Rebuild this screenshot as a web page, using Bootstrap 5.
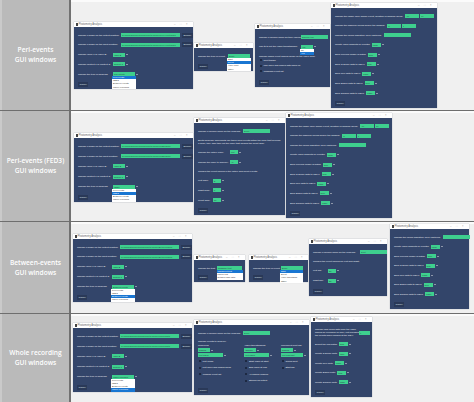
<!DOCTYPE html>
<html lang="en">
<head>
<meta charset="utf-8">
<title>GUI windows</title>
<link href="https://cdn.jsdelivr.net/npm/bootstrap@5.3.0/dist/css/bootstrap.min.css" rel="stylesheet">
<style>
html,body{margin:0;width:474px;height:402px;overflow:hidden;background:#fff}
.sheet{width:474px;height:402px}
.band{border-bottom:1.5px solid #6e6e6e}
.b1{height:111px}.b2{height:111px}.b3{height:92px}.b4{height:88px;border-bottom:0}
.side{width:71px;flex:none;background:#bababa;border-left:2px solid #cacaca;border-right:2px solid #717171;color:#fff;font:600 6.6px/10px "Open Sans",sans-serif;text-align:center}
.canvas{flex:1;background:#f0f0f0;border-top:2px solid #fbfbfb;position:relative}
.pw{position:absolute;background:#33456a;box-shadow:0 0 1px #9aa0aa}
.pw-title{height:5px;background:#fff;color:#666;font:2.6px/5px "Liberation Sans",sans-serif;padding-left:1.5px;gap:1px;flex:none;white-space:nowrap;overflow:hidden}
.pw-icon{width:2px;height:2.5px;background:#444;flex:none}
.pw-ctrl{margin-left:auto;color:#999;padding-right:1px;letter-spacing:4.5px;flex:none}
.pw-body{flex:1;padding:6px 4px 2px;color:#eef1f6;font:2.4px/3px "Liberation Sans",sans-serif;min-height:0}
.rw{height:4px;gap:1px;flex:none}
.rw2{height:6px}.rw3{height:9px}
.lb{flex:none;white-space:nowrap}
.wrapl{white-space:normal;flex:none}
.form-control.gi{display:block;height:4px;min-height:0;padding:0 1px;border:0;border-radius:0;background:#3ecf8e;color:#1d5a4a;font:2.1px/4px "Liberation Sans",sans-serif;flex:none}
.gs{display:inline-block;height:4px;background:#3ecf8e;color:#1f3a44;padding-left:1px;line-height:4px;flex:none;font-size:2.1px;white-space:nowrap}
.arrow{width:0;height:0;border-left:1px solid transparent;border-right:1px solid transparent;border-top:1.2px solid #e8e8e8;flex:none}
.btn.gb{height:5px;min-height:0;padding:0 1.5px;border:0;border-radius:0;background:#2a3958;color:#dfe3ea;font:2.3px/5px "Liberation Sans",sans-serif;flex:none;--bs-btn-hover-bg:#2a3958}
.cancel-row{flex:none;line-height:5px}
.ddl{position:absolute;z-index:2;background:#fff;color:#333;font:2.2px/3.2px "Liberation Sans",sans-serif;box-shadow:0 0 .5px #777}
.ddl div{padding-left:1px;white-space:nowrap;overflow:hidden}
.ddl .on{background:#1976d2;color:#fff}
.ck{height:5.5px;gap:1.5px;flex:none;padding-left:1px;white-space:nowrap}
.ck i{width:2px;height:2px;background:#1d2942;display:block;flex:none}
.sub{line-height:3px;flex:none;white-space:nowrap}
/* window places on the free canvas of each band */
.a1{left:3px;top:20px;width:119px;height:67px}
.a2{left:123px;top:41px;width:59px;height:28px}
.a3{left:184px;top:22px;width:75px;height:63px}
.a4{left:260px;top:1px;width:106px;height:105px}
.c1{left:3px;top:20px;width:119px;height:69px}
.c2{left:123px;top:5px;width:91px;height:97px}
.c3{left:215px;top:0;width:106px;height:105px}
.e1{left:2px;top:10px;width:119px;height:68px}
.e2{left:123px;top:31px;width:51px;height:27px}
.e3{left:178px;top:31px;width:59px;height:27px}
.e4{left:238px;top:15px;width:78px;height:57px}
.e5{left:319px;top:0;width:79px;height:85px}
.g1{left:2px;top:7px;width:119px;height:69px}
.g2{left:123px;top:4px;width:115px;height:75px}
.g3{left:240px;top:1px;width:61px;height:80px}
/* label columns */
.l13{width:14px}.l18{width:18px}.l26{width:26px}.l29{width:29px}.l32{width:31px}.l33{width:34px}.l40{width:42px}.l41{width:41px}
.l44{width:44px}.l46{width:45.5px}
/* field widths */
.i59{width:59px!important}.i27{width:27px!important}.i14{width:14px!important}.i11{width:11px!important}.i26{width:26px}.i25{width:25px}
.i8{width:8px}.i9{width:9px}.i12{width:12px}.i22{width:22px}
.ml2{margin-left:1px}
/* dropdown places */
.d-main{left:34px;top:4px;width:24px}
.d-event{left:29px;top:4px;width:24px}
.d-yes{left:41px;top:4px;width:14px}
.d-test{left:18.5px;top:4px;width:26px}
.d-ev2{left:27px;top:4px;width:23px}
/* whole recording columns */
.trio{height:40px;margin-top:-2px}
.tc1{width:47px}.tc2{width:37px}.tc3{width:24px}
.tc1,.tc2,.tc3{gap:1px}
.txtblk{flex:none}
</style>
</head>
<body>
<div class="sheet d-flex flex-column">

<section class="band b1 d-flex">
 <div class="side d-flex align-items-center justify-content-center">Peri-events<br>GUI windows</div>
 <div class="canvas">
  <div class="pw a1 d-flex flex-column">
   <div class="pw-title d-flex align-items-center"><span class="pw-icon"></span>Photometry Analysis<span class="pw-ctrl">–□×</span></div>
   <div class="pw-body d-flex flex-column justify-content-between">
    <div class="rw d-flex align-items-center"><span class="lb l40">Choose a folder for the output location:</span><input class="form-control gi i59" readonly value="C:\Users\Documents\Photometry\GuPPy\Peri-events\Data"><button class="btn gb ml2">Browse</button></div>
    <div class="rw d-flex align-items-center"><span class="lb l40">Choose a folder for the input location:</span><input class="form-control gi i59" readonly value="C:\Users\Documents\Photometry\GuPPy\Peri-events\Data"><button class="btn gb ml2">Browse</button></div>
    <div class="rw d-flex align-items-center"><span class="lb l33">Choose value 0 or value B:</span><span class="gs i12">Value B</span><span class="arrow"></span></div>
    <div class="rw d-flex align-items-center"><span class="lb l33">Choose context 1 or context 2:</span><span class="gs i12">Context 1</span><span class="arrow"></span></div>
    <div class="rw d-flex align-items-center position-relative"><span class="lb l33">Choose the type of analysis:</span><span class="gs i22">Peri-events</span><span class="arrow"></span>
     <div class="ddl d-main"><div class="on">Peri-events</div><div>FED3</div><div>Between-events</div><div>Whole recording</div></div></div>
    <div class="cancel-row"><button class="btn gb">Cancel</button></div>
   </div>
  </div>
  <div class="pw a2 d-flex flex-column">
   <div class="pw-title d-flex align-items-center"><span class="pw-icon"></span>Photometry Analysis<span class="pw-ctrl">–□×</span></div>
   <div class="pw-body d-flex flex-column justify-content-between">
    <div class="rw d-flex align-items-center position-relative"><span class="lb l29">Choose the type of event:</span><span class="gs i22">Event</span>
     <div class="ddl d-event"><div>Start</div><div class="on">Event</div><div>Video bout</div><div>Other</div></div></div>
    <div class="cancel-row"><button class="btn gb">Cancel</button></div>
   </div>
  </div>
  <div class="pw a3 d-flex flex-column">
   <div class="pw-title d-flex align-items-center"><span class="pw-icon"></span>Photometry Analysis<span class="pw-ctrl">–□×</span></div>
   <div class="pw-body d-flex flex-column justify-content-between">
    <div class="rw d-flex align-items-center"><span class="lb l41">Choose a column name for time values:</span><input class="form-control gi i27" readonly value="Elapsed time"></div>
    <div class="rw d-flex align-items-center position-relative"><span class="lb l41">Use ttl to set the video timestamps?:</span><span class="gs i12">Yes</span><span class="arrow"></span>
     <div class="ddl d-yes"><div>No</div><div class="on">Yes</div></div></div>
    <div class="txtblk">
     <div class="sub">Choose which event should cause up the video clips:</div>
     <div class="ck d-flex align-items-center"><i></i>Next trigger</div>
     <div class="ck d-flex align-items-center"><i></i>Use open and closed with filling up</div>
     <div class="ck d-flex align-items-center"><i></i>Windows event list</div>
    </div>
    <div class="cancel-row"><button class="btn gb">Cancel</button></div>
   </div>
  </div>
  <div class="pw a4 d-flex flex-column">
   <div class="pw-title d-flex align-items-center"><span class="pw-icon"></span>Photometry Analysis<span class="pw-ctrl">–□×</span></div>
   <div class="pw-body d-flex flex-column justify-content-between">
    <div class="rw d-flex align-items-center"><span class="lb">Choose the range (sec) before event, duration of window (secs):</span><input class="form-control gi i14 ml2" readonly value="-10"><input class="form-control gi i14" readonly value="10"></div>
    <div class="rw d-flex align-items-center"><span class="lb">Choose the baseline period before the window:</span><input class="form-control gi i14 ml2" readonly value="-5"><input class="form-control gi i14" readonly value="0"></div>
    <div class="rw d-flex align-items-center"><span class="lb">Choose the colour signature (sec) captured:</span><input class="form-control gi i27 ml2" readonly value=""></div>
    <div class="rw d-flex align-items-center"><span class="lb">Create video snippets of events?</span><span class="gs i9 ml2">False</span><span class="arrow"></span></div>
    <div class="rw d-flex align-items-center"><span class="lb">Save preview image of data?</span><span class="gs i9 ml2">True</span><span class="arrow"></span></div>
    <div class="rw d-flex align-items-center"><span class="lb">Save Z-Score data to CSV?</span><span class="gs i9 ml2">True</span><span class="arrow"></span></div>
    <div class="rw d-flex align-items-center"><span class="lb">Save dFF data to CSV?</span><span class="gs i9 ml2">False</span><span class="arrow"></span></div>
    <div class="rw d-flex align-items-center"><span class="lb">Save BOUT data to CSV?</span><span class="gs i9 ml2">True</span><span class="arrow"></span></div>
    <div class="rw d-flex align-items-center"><span class="lb">Save SCaMP data to CSV?</span><span class="gs i9 ml2">False</span><span class="arrow"></span></div>
    <div class="cancel-row"><button class="btn gb">Cancel</button></div>
   </div>
  </div>
 </div>
</section>

<section class="band b2 d-flex">
 <div class="side d-flex align-items-center justify-content-center">Peri-events (FED3)<br>GUI windows</div>
 <div class="canvas">
  <div class="pw c1 d-flex flex-column">
   <div class="pw-title d-flex align-items-center"><span class="pw-icon"></span>Photometry Analysis<span class="pw-ctrl">–□×</span></div>
   <div class="pw-body d-flex flex-column justify-content-between">
    <div class="rw d-flex align-items-center"><span class="lb l40">Choose a folder for the output location:</span><input class="form-control gi i59" readonly value="C:\Users\Documents\Photometry\GuPPy\FED3\Data"><button class="btn gb ml2">Browse</button></div>
    <div class="rw d-flex align-items-center"><span class="lb l40">Choose a folder for the input location:</span><input class="form-control gi i59" readonly value="C:\Users\Documents\Photometry\GuPPy\FED3\Data"><button class="btn gb ml2">Browse</button></div>
    <div class="rw d-flex align-items-center"><span class="lb l33">Choose value 0 or value B:</span><span class="gs i12">Value B</span><span class="arrow"></span></div>
    <div class="rw d-flex align-items-center"><span class="lb l33">Choose context 1 or context 2:</span><span class="gs i12">Context 1</span><span class="arrow"></span></div>
    <div class="rw d-flex align-items-center position-relative"><span class="lb l33">Choose the type of analysis:</span><span class="gs i22">FED3</span><span class="arrow"></span>
     <div class="ddl d-main"><div>Peri-events</div><div class="on">FED3</div><div>Between-events</div><div>Whole recording</div></div></div>
    <div class="cancel-row"><button class="btn gb">Cancel</button></div>
   </div>
  </div>
  <div class="pw c2 d-flex flex-column">
   <div class="pw-title d-flex align-items-center"><span class="pw-icon"></span>Photometry Analysis<span class="pw-ctrl">–□×</span></div>
   <div class="pw-body d-flex flex-column justify-content-between">
    <div class="rw d-flex align-items-center"><span class="lb l44">Choose a column name for the analysis:</span><input class="form-control gi i27" readonly value="Event"></div>
    <div class="rw2 wrapl">Bouts analysis: Timepoints are taken from events within the poke that precede<br>a poke; they also take out the poke that caused the pellet drop.</div>
    <div class="rw d-flex align-items-center"><span class="lb l32">Choose the active poke:</span><span class="gs i8">Left</span><span class="arrow"></span></div>
    <div class="rw d-flex align-items-center"><span class="lb l32">Choose the poke to analyze:</span><span class="gs i8">All</span><span class="arrow"></span></div>
    <div class="sub">Confirm the event names in the active and pellet events:</div>
    <div class="rw d-flex align-items-center"><span class="lb l13">Left poke:</span><span class="gs i8">8</span><span class="arrow"></span></div>
    <div class="rw d-flex align-items-center"><span class="lb l13">Right poke:</span><span class="gs i8">9</span><span class="arrow"></span></div>
    <div class="rw d-flex align-items-center"><span class="lb l13">Pellet drop:</span><span class="gs i8">10</span><span class="arrow"></span></div>
    <div class="cancel-row"><button class="btn gb">Cancel</button></div>
   </div>
  </div>
  <div class="pw c3 d-flex flex-column">
   <div class="pw-title d-flex align-items-center"><span class="pw-icon"></span>Photometry Analysis<span class="pw-ctrl">–□×</span></div>
   <div class="pw-body d-flex flex-column justify-content-between">
    <div class="rw d-flex align-items-center"><span class="lb">Choose the range (sec) before event, duration of window (secs):</span><input class="form-control gi i14 ml2" readonly value="-10"><input class="form-control gi i14" readonly value="10"></div>
    <div class="rw d-flex align-items-center"><span class="lb">Choose the baseline period before the window:</span><input class="form-control gi i14 ml2" readonly value="-5"><input class="form-control gi i14" readonly value="0"></div>
    <div class="rw d-flex align-items-center"><span class="lb">Choose the colour signature (sec) captured:</span><input class="form-control gi i27 ml2" readonly value=""></div>
    <div class="rw d-flex align-items-center"><span class="lb">Create video snippets of events?</span><span class="gs i9 ml2">False</span><span class="arrow"></span></div>
    <div class="rw d-flex align-items-center"><span class="lb">Save preview image of data?</span><span class="gs i9 ml2">True</span><span class="arrow"></span></div>
    <div class="rw d-flex align-items-center"><span class="lb">Save Z-Score data to CSV?</span><span class="gs i9 ml2">True</span><span class="arrow"></span></div>
    <div class="rw d-flex align-items-center"><span class="lb">Save dFF data to CSV?</span><span class="gs i9 ml2">False</span><span class="arrow"></span></div>
    <div class="rw d-flex align-items-center"><span class="lb">Save BOUT data to CSV?</span><span class="gs i9 ml2">True</span><span class="arrow"></span></div>
    <div class="rw d-flex align-items-center"><span class="lb">Save SCaMP data to CSV?</span><span class="gs i9 ml2">False</span><span class="arrow"></span></div>
    <div class="cancel-row"><button class="btn gb">Cancel</button></div>
   </div>
  </div>
 </div>
</section>

<section class="band b3 d-flex">
 <div class="side d-flex align-items-center justify-content-center">Between-events<br>GUI windows</div>
 <div class="canvas">
  <div class="pw e1 d-flex flex-column">
   <div class="pw-title d-flex align-items-center"><span class="pw-icon"></span>Photometry Analysis<span class="pw-ctrl">–□×</span></div>
   <div class="pw-body d-flex flex-column justify-content-between">
    <div class="rw d-flex align-items-center"><span class="lb l40">Choose a folder for the output location:</span><input class="form-control gi i59" readonly value="C:\Users\Documents\Photometry\GuPPy\Between\Data"><button class="btn gb ml2">Browse</button></div>
    <div class="rw d-flex align-items-center"><span class="lb l40">Choose a folder for the input location:</span><input class="form-control gi i59" readonly value="C:\Users\Documents\Photometry\GuPPy\Between\Data"><button class="btn gb ml2">Browse</button></div>
    <div class="rw d-flex align-items-center"><span class="lb l33">Choose value 0 or value B:</span><span class="gs i12">Value B</span><span class="arrow"></span></div>
    <div class="rw d-flex align-items-center"><span class="lb l33">Choose context 1 or context 2:</span><span class="gs i12">Context 1</span><span class="arrow"></span></div>
    <div class="rw d-flex align-items-center position-relative"><span class="lb l33">Choose the type of analysis:</span><span class="gs i22">Between-events</span><span class="arrow"></span>
     <div class="ddl d-main"><div>Peri-events</div><div>FED3</div><div class="on">Between-events</div><div>Whole recording</div></div></div>
    <div class="cancel-row"><button class="btn gb">Cancel</button></div>
   </div>
  </div>
  <div class="pw e2 d-flex flex-column">
   <div class="pw-title d-flex align-items-center"><span class="pw-icon"></span>Photometry Analysis<span class="pw-ctrl">–□×</span></div>
   <div class="pw-body d-flex flex-column justify-content-between">
    <div class="rw d-flex align-items-center position-relative"><span class="lb l18">Choose the test:</span><span class="gs i25">Unpaired t-test</span>
     <div class="ddl d-test"><div class="on">Unpaired t-test</div><div>Paired test</div><div>Detailed plan data</div></div></div>
    <div class="cancel-row"><button class="btn gb">Cancel</button></div>
   </div>
  </div>
  <div class="pw e3 d-flex flex-column">
   <div class="pw-title d-flex align-items-center"><span class="pw-icon"></span>Photometry Analysis<span class="pw-ctrl">–□×</span></div>
   <div class="pw-body d-flex flex-column justify-content-between">
    <div class="rw d-flex align-items-center position-relative"><span class="lb l26">Choose the type of event:</span><span class="gs i22 ml2">Event</span>
     <div class="ddl d-ev2"><div class="on">Start</div><div>Event</div><div>Video timestamp</div><div>Other</div></div></div>
    <div class="cancel-row"><button class="btn gb">Cancel</button></div>
   </div>
  </div>
  <div class="pw e4 d-flex flex-column">
   <div class="pw-title d-flex align-items-center"><span class="pw-icon"></span>Photometry Analysis<span class="pw-ctrl">–□×</span></div>
   <div class="pw-body d-flex flex-column justify-content-between">
    <div class="rw d-flex align-items-center"><span class="lb l46">Choose a column name for the analysis:</span><input class="form-control gi i27" readonly value="Event"></div>
    <div class="sub">Confirm the event names for Left and Right:</div>
    <div class="rw d-flex align-items-center"><span class="lb l13">Left bar:</span><span class="gs i8">20</span><span class="arrow"></span></div>
    <div class="rw d-flex align-items-center"><span class="lb l13">Right bar:</span><span class="gs i8">21</span><span class="arrow"></span></div>
    <div class="cancel-row"><button class="btn gb">Cancel</button></div>
   </div>
  </div>
  <div class="pw e5 d-flex flex-column">
   <div class="pw-title d-flex align-items-center"><span class="pw-icon"></span>Photometry Analysis<span class="pw-ctrl">–□×</span></div>
   <div class="pw-body d-flex flex-column justify-content-between">
    <div class="rw d-flex align-items-center"><span class="lb">Choose the colour signature (sec) captured:</span><input class="form-control gi i27 ml2" readonly value=""></div>
    <div class="rw d-flex align-items-center"><span class="lb">Create video snippets of events?</span><span class="gs i9 ml2">False</span><span class="arrow"></span></div>
    <div class="rw d-flex align-items-center"><span class="lb">Save preview image of data?</span><span class="gs i9 ml2">True</span><span class="arrow"></span></div>
    <div class="rw d-flex align-items-center"><span class="lb">Save Z-Score data to CSV?</span><span class="gs i9 ml2">True</span><span class="arrow"></span></div>
    <div class="rw d-flex align-items-center"><span class="lb">Save dFF data to CSV?</span><span class="gs i9 ml2">False</span><span class="arrow"></span></div>
    <div class="rw d-flex align-items-center"><span class="lb">Save BOUT data to CSV?</span><span class="gs i9 ml2">True</span><span class="arrow"></span></div>
    <div class="rw d-flex align-items-center"><span class="lb">Save SCaMP data to CSV?</span><span class="gs i9 ml2">False</span><span class="arrow"></span></div>
    <div class="cancel-row"><button class="btn gb">Cancel</button></div>
   </div>
  </div>
 </div>
</section>

<section class="band b4 d-flex">
 <div class="side d-flex align-items-center justify-content-center">Whole recording<br>GUI windows</div>
 <div class="canvas">
  <div class="pw g1 d-flex flex-column">
   <div class="pw-title d-flex align-items-center"><span class="pw-icon"></span>Photometry Analysis<span class="pw-ctrl">–□×</span></div>
   <div class="pw-body d-flex flex-column justify-content-between">
    <div class="rw d-flex align-items-center"><span class="lb l40">Choose a folder for the output location:</span><input class="form-control gi i59" readonly value="C:\Users\Documents\Photometry\GuPPy\Whole\Data"><button class="btn gb ml2">Browse</button></div>
    <div class="rw d-flex align-items-center"><span class="lb l40">Choose a folder for the input location:</span><input class="form-control gi i59" readonly value="C:\Users\Documents\Photometry\GuPPy\Whole\Data"><button class="btn gb ml2">Browse</button></div>
    <div class="rw d-flex align-items-center"><span class="lb l33">Choose value 0 or value B:</span><span class="gs i12">Value B</span><span class="arrow"></span></div>
    <div class="rw d-flex align-items-center"><span class="lb l33">Choose context 1 or context 2:</span><span class="gs i12">Context 1</span><span class="arrow"></span></div>
    <div class="rw d-flex align-items-center position-relative"><span class="lb l33">Choose the type of analysis:</span><span class="gs i22">Whole recording</span><span class="arrow"></span>
     <div class="ddl d-main"><div>Peri-events</div><div>FED3</div><div>Between-events</div><div class="on">Whole recording</div></div></div>
    <div class="cancel-row"><button class="btn gb">Cancel</button></div>
   </div>
  </div>
  <div class="pw g2 d-flex flex-column">
   <div class="pw-title d-flex align-items-center"><span class="pw-icon"></span>Photometry Analysis<span class="pw-ctrl">–□×</span></div>
   <div class="pw-body d-flex flex-column justify-content-between">
    <div class="rw d-flex align-items-center"><span class="lb l44">Choose a column name for the analysis:</span><input class="form-control gi i27" readonly value="Event"></div>
    <div class="trio d-flex">
     <div class="d-flex flex-column tc1">
      <div class="sub">Choose events to analyze:</div>
      <div class="sub">Pokes bar</div>
      <div class="rw d-flex align-items-center"><span class="gs i12">Smooth</span><span class="arrow"></span></div>
      <div class="rw d-flex align-items-center"><span class="gs i25">Left pokes</span><span class="arrow"></span></div>
      <div class="ck d-flex align-items-center"><i></i>Left views</div>
      <div class="ck d-flex align-items-center"><i></i>Left open and closed filling</div>
      <div class="ck d-flex align-items-center"><i></i>Window event list</div>
     </div>
     <div class="d-flex flex-column tc2">
      <div class="sub">&nbsp;</div>
      <div class="sub">Video timestamping</div>
      <div class="rw d-flex align-items-center"><span class="gs i12">Smooth</span><span class="arrow"></span></div>
      <div class="rw d-flex align-items-center"><span class="gs i25">Left pokes</span><span class="arrow"></span></div>
      <div class="ck d-flex align-items-center"><i></i>Start video at start</div>
      <div class="ck d-flex align-items-center"><i></i>End video at end</div>
      <div class="ck d-flex align-items-center"><i></i>All frames marked</div>
      <div class="ck d-flex align-items-center"><i></i>Stream as output</div>
     </div>
     <div class="d-flex flex-column tc3">
      <div class="sub">&nbsp;</div>
      <div class="sub">Movement bout bar</div>
      <div class="rw d-flex align-items-center"><span class="gs i12">Smooth</span><span class="arrow"></span></div>
      <div class="rw d-flex align-items-center"><span class="gs i22">Left long bout</span><span class="arrow"></span></div>
      <div class="ck d-flex align-items-center"><i></i>Timed bout</div>
      <div class="ck d-flex align-items-center"><i></i>Start bar</div>
     </div>
    </div>
    <div class="cancel-row"><button class="btn gb">Cancel</button></div>
   </div>
  </div>
  <div class="pw g3 d-flex flex-column">
   <div class="pw-title d-flex align-items-center"><span class="pw-icon"></span>Photometry Analysis<span class="pw-ctrl">–□×</span></div>
   <div class="pw-body d-flex flex-column justify-content-between">
    <div class="rw3 d-flex align-items-center"><span class="wrapl l44">Choose how much data from the video should be excluded (in min), not including the pellets when looking at the CSV:</span><input class="form-control gi i11" readonly value="0"></div>
    <div class="rw d-flex align-items-center"><span class="lb">Export the raw data?</span><span class="gs i9 ml2">True</span><span class="arrow"></span></div>
    <div class="rw d-flex align-items-center"><span class="lb">Create Z-Score plot?</span><span class="gs i9 ml2">True</span><span class="arrow"></span></div>
    <div class="rw d-flex align-items-center"><span class="lb">Create dFF plot?</span><span class="gs i9 ml2">False</span><span class="arrow"></span></div>
    <div class="rw d-flex align-items-center"><span class="lb">Create BOUT plot?</span><span class="gs i9 ml2">True</span><span class="arrow"></span></div>
    <div class="rw d-flex align-items-center"><span class="lb">Create SCaMP plot?</span><span class="gs i9 ml2">False</span><span class="arrow"></span></div>
    <div class="cancel-row"><button class="btn gb">Cancel</button></div>
   </div>
  </div>
 </div>
</section>

</div>
<script src="https://cdn.jsdelivr.net/npm/bootstrap@5.3.0/dist/js/bootstrap.bundle.min.js"></script>
</body>
</html>
